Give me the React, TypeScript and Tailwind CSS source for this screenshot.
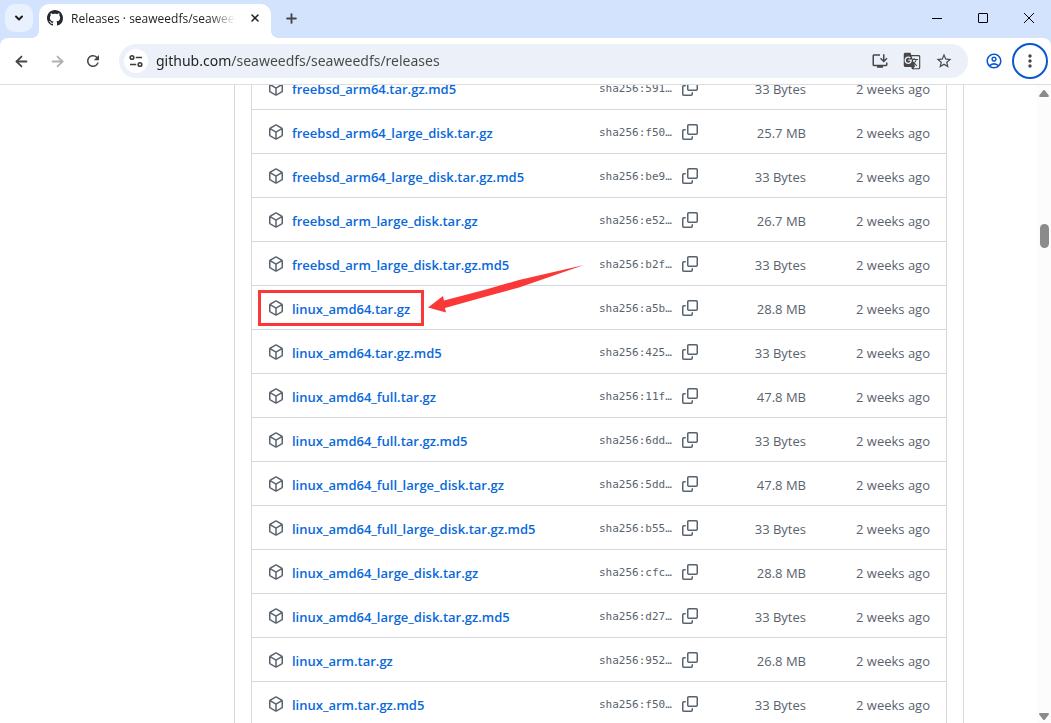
import React from "react";
import { ArrowLeft, ArrowRight, Plus, X, ChevronDown } from "lucide-react";
import { MdRefresh, MdGTranslate, MdOutlineInstallDesktop, MdStarBorder, MdOutlineAccountCircle, MdMoreVert } from "react-icons/md";

type Asset = {
    name: string;
    sha: string;
    size: string;
    marked?: boolean;
};

const assets: Asset[] = [
    { name: "freebsd_arm64.tar.gz.md5", sha: "591", size: "33 Bytes" },
    { name: "freebsd_arm64_large_disk.tar.gz", sha: "f50", size: "25.7 MB" },
    { name: "freebsd_arm64_large_disk.tar.gz.md5", sha: "be9", size: "33 Bytes" },
    { name: "freebsd_arm_large_disk.tar.gz", sha: "e52", size: "26.7 MB" },
    { name: "freebsd_arm_large_disk.tar.gz.md5", sha: "b2f", size: "33 Bytes" },
    { name: "linux_amd64.tar.gz", sha: "a5b", size: "28.8 MB", marked: true },
    { name: "linux_amd64.tar.gz.md5", sha: "425", size: "33 Bytes" },
    { name: "linux_amd64_full.tar.gz", sha: "11f", size: "47.8 MB" },
    { name: "linux_amd64_full.tar.gz.md5", sha: "6dd", size: "33 Bytes" },
    { name: "linux_amd64_full_large_disk.tar.gz", sha: "5dd", size: "47.8 MB" },
    { name: "linux_amd64_full_large_disk.tar.gz.md5", sha: "b55", size: "33 Bytes" },
    { name: "linux_amd64_large_disk.tar.gz", sha: "cfc", size: "28.8 MB" },
    { name: "linux_amd64_large_disk.tar.gz.md5", sha: "d27", size: "33 Bytes" },
    { name: "linux_arm.tar.gz", sha: "952", size: "26.8 MB" },
    { name: "linux_arm.tar.gz.md5", sha: "f50", size: "33 Bytes" },
];

const GithubMark = () => (
    <svg viewBox="0 0 16 16" className="size-4 shrink-0 fill-[#24292f]">
        <path d="M8 0C3.58 0 0 3.58 0 8c0 3.54 2.29 6.53 5.47 7.59.4.07.55-.17.55-.38 0-.19-.01-.82-.01-1.49-2.01.37-2.53-.49-2.69-.94-.09-.23-.48-.94-.82-1.13-.28-.15-.68-.52-.01-.53.63-.01 1.08.58 1.23.82.72 1.21 1.87.87 2.33.66.07-.52.28-.87.51-1.07-1.78-.2-3.64-.89-3.64-3.95 0-.87.31-1.59.82-2.15-.08-.2-.36-1.02.08-2.12 0 0 .67-.21 2.2.82.64-.18 1.32-.27 2-.27.68 0 1.36.09 2 .27 1.53-1.04 2.2-.82 2.2-.82.44 1.1.16 1.92.08 2.12.51.56.82 1.27.82 2.15 0 3.07-1.87 3.75-3.65 3.95.29.25.54.73.54 1.48 0 1.07-.01 1.93-.01 2.2 0 .21.15.46.55.38A8.013 8.013 0 0 0 16 8c0-4.42-3.58-8-8-8z" />
    </svg>
);

const PackageIcon = () => (
    <svg viewBox="0 0 16 16" className="size-4 shrink-0 fill-[#59636e]">
        <path d="m8.878.392 5.25 3.045c.54.314.872.89.872 1.514v6.098a1.75 1.75 0 0 1-.872 1.514l-5.25 3.045a1.75 1.75 0 0 1-1.756 0l-5.25-3.045A1.75 1.75 0 0 1 1 11.049V4.951c0-.624.332-1.201.872-1.514L7.122.392a1.75 1.75 0 0 1 1.756 0ZM7.875 1.69l-4.63 2.685L8 7.133l4.755-2.758-4.63-2.685a.248.248 0 0 0-.25 0ZM2.5 5.677v5.372c0 .09.047.171.125.216l4.625 2.683V8.432Zm6.25 8.271 4.625-2.683a.25.25 0 0 0 .125-.216V5.677L8.75 8.432Z" />
    </svg>
);

const CopyIcon = () => (
    <svg viewBox="0 0 16 16" className="size-4 fill-[#59636e]">
        <path d="M0 6.75C0 5.784.784 5 1.75 5h1.5a.75.75 0 0 1 0 1.5h-1.5a.25.25 0 0 0-.25.25v7.5c0 .138.112.25.25.25h7.5a.25.25 0 0 0 .25-.25v-1.5a.75.75 0 0 1 1.5 0v1.5A1.75 1.75 0 0 1 9.25 16h-7.5A1.75 1.75 0 0 1 0 14.25Z" />
        <path d="M5 1.75C5 .784 5.784 0 6.75 0h7.5C15.216 0 16 .784 16 1.75v7.5A1.75 1.75 0 0 1 14.25 11h-7.5A1.75 1.75 0 0 1 5 9.25Zm1.75-.25a.25.25 0 0 0-.25.25v7.5c0 .138.112.25.25.25h7.5a.25.25 0 0 0 .25-.25v-7.5a.25.25 0 0 0-.25-.25Z" />
    </svg>
);

const TuneIcon = () => (
    <svg viewBox="0 0 14 14" className="size-3.5 fill-none stroke-[#3c3c3c]" strokeWidth="1.6">
        <circle cx="3" cy="3.5" r="1.8" />
        <path d="M6.8 3.5H13M1 10.5h6.2" />
        <circle cx="11" cy="10.5" r="1.8" />
    </svg>
);

const TitleBar = () => (
    <header className="flex h-[38px] shrink-0 items-start bg-[#d3e3fd] pl-[5px]">
        <button aria-label="Search tabs" className="mt-1 flex size-7 items-center justify-center rounded-[10px] bg-[#e9f0fe]">
            <ChevronDown size={12} strokeWidth={4} className="text-[#1f1f1f]" />
        </button>
        <div className="relative ml-1.5 mt-1 flex h-[34px] w-[232px] items-center rounded-t-[10px] bg-white pb-1.5 pl-2 pr-2">
            <span className="absolute -left-2 bottom-0 size-2 bg-[radial-gradient(circle_at_0_0,#d3e3fd_8px,white_8px)]" />
            <span className="absolute -right-2 bottom-0 size-2 bg-[radial-gradient(circle_at_100%_0,#d3e3fd_8px,white_8px)]" />
            <GithubMark />
            <span className="ml-2 mt-px flex-1 overflow-hidden whitespace-nowrap text-xs text-[#1f1f1f] [mask-image:linear-gradient(90deg,black_82%,transparent_98%)]">Releases · seaweedfs/seaweedfs</span>
            <button aria-label="Close tab" className="ml-2 flex size-4 items-center justify-center">
                <X size={12} strokeWidth={3} className="text-[#1f1f1f]" />
            </button>
        </div>
        <button aria-label="New tab" className="ml-1.5 mt-1 flex size-7 items-center justify-center">
            <Plus size={15} strokeWidth={3} className="text-[#474747]" />
        </button>
        <div className="-mr-px ml-auto flex">
            <button aria-label="Minimize" className="flex h-9 w-[46px] items-center justify-center">
                <span className="h-px w-2.5 bg-black" />
            </button>
            <button aria-label="Maximize" className="flex h-9 w-[46px] items-center justify-center">
                <span className="size-2.5 rounded-[1px] border border-black" />
            </button>
            <button aria-label="Close" className="flex h-9 w-[46px] items-center justify-center">
                <svg viewBox="0 0 10 10" className="size-2.5 stroke-black">
                    <path d="M0 0l10 10M10 0L0 10" />
                </svg>
            </button>
        </div>
    </header>
);

const Toolbar = () => (
    <div className="shrink-0 bg-[#d3e3fd]">
        <nav className="flex h-[47px] items-center rounded-t-lg border-b border-[#dcdde0] bg-white px-[3px]">
            <button aria-label="Back" className="flex size-9 items-center justify-center text-[#474747]">
                <ArrowLeft size={17} strokeWidth={2.5} />
            </button>
            <button aria-label="Forward" className="flex size-9 items-center justify-center text-[#b0b0b0]">
                <ArrowRight size={17} strokeWidth={2.5} />
            </button>
            <button aria-label="Reload" className="flex size-9 items-center justify-center text-[#474747]">
                <MdRefresh size={18} />
            </button>
            <div className="ml-2 flex h-[34px] flex-1 items-center rounded-full bg-[#ebf0f9] pl-[5px] pr-2 text-[#474747]">
                <button aria-label="View site information" className="flex size-6 items-center justify-center rounded-full bg-white">
                    <TuneIcon />
                </button>
                <input
                    type="text"
                    aria-label="Address"
                    defaultValue="github.com/seaweedfs/seaweedfs/releases"
                    className="ml-2 min-w-0 flex-1 bg-[linear-gradient(90deg,#1f1f1f_75px,#474747_75px)] bg-clip-text font-['Noto_Sans',sans-serif] text-sm text-transparent outline-none"
                />
                <button aria-label="Install" className="flex w-8 justify-center">
                    <MdOutlineInstallDesktop size={18} />
                </button>
                <button aria-label="Translate" className="flex w-8 justify-center">
                    <MdGTranslate size={18} />
                </button>
                <button aria-label="Bookmark" className="flex w-8 justify-center">
                    <MdStarBorder size={18} />
                </button>
            </div>
            <button aria-label="Profile" className="ml-2 flex size-9 items-center justify-center text-[#0b57d0]">
                <MdOutlineAccountCircle size={18} />
            </button>
            <button aria-label="Menu" className="flex size-9 items-center justify-center rounded-full border-2 border-[#0b57d0] text-[#474747]">
                <MdMoreVert size={20} />
            </button>
        </nav>
    </div>
);

// red frame and arrow drawn over the highlighted download
const Marker = () => (
    <>
        <span className="pointer-events-none absolute -left-2.5 -right-3.5 -top-2 h-9 border-3 border-[#fb3838]" />
        <svg viewBox="0 0 156 52" className="pointer-events-none absolute -top-9 left-full ml-[18px] h-[52px] w-[156px] fill-[#fb3838]">
            <path d="M0 45.5L15 34L16 38.5L58 27.5L91 18L156 3L91 25.5L58 34.5L17 46L18 50.5Z" />
        </svg>
    </>
);

const AssetRow = ({ asset }: { asset: Asset }) => (
    <li className="flex h-11 items-center border-t border-[#d1d9e0] px-4 text-[13px] text-[#59636e]">
        <div className="flex-1">
            <div className="relative inline-flex items-center gap-2 align-middle">
                <PackageIcon />
                <a href="#" className="whitespace-nowrap pt-0.5 font-semibold leading-4.5 text-[#0969da]">
                    {asset.name}
                </a>
                {asset.marked && <Marker />}
            </div>
        </div>
        <span className="w-[73px] pt-1 font-['DejaVu_Sans_Mono',monospace] text-[11px]">sha256:{asset.sha}…</span>
        <button aria-label="Copy digest" className="ml-2.5">
            <CopyIcon />
        </button>
        <span className="w-[108px] pt-1 text-right">{asset.size}</span>
        <span className="w-[124px] pt-1 text-right">2 weeks ago</span>
    </li>
);

const ScrollBar = () => (
    <div className="flex w-3.5 shrink-0 flex-col items-center bg-[#fcfcfc] pb-[3px] pt-[5px]">
        <svg viewBox="0 0 10 7" className="h-[7px] w-2.5 fill-[#8b8b8b]">
            <path d="M4 .6Q5-.5 6 .6L9.8 5.6Q10 7 9 7H1Q0 7 .2 5.6Z" />
        </svg>
        <span className="mt-[127px] h-6 w-[9px] rounded-full bg-[#8b8b8b]" />
        <svg viewBox="0 0 10 7" className="mt-auto h-[7px] w-2.5 fill-[#8b8b8b]">
            <path d="M4 6.4Q5 7.5 6 6.4L9.8 1.4Q10 0 9 0H1Q0 0 .2 1.4Z" />
        </svg>
    </div>
);

const App = () => {
    return (
        <div className="flex h-screen flex-col overflow-hidden bg-white font-['Open_Sans',sans-serif]">
            <TitleBar />
            <Toolbar />
            <div className="flex min-h-0 flex-1">
                <main className="min-w-0 flex-1 overflow-hidden pl-[234px] pr-[73px]">
                    <section className="-mt-5 border-x border-[#d1d9e0] px-4">
                        <ul className="border-x border-[#d1d9e0]">
                            {assets.map((asset) => (
                                <AssetRow key={asset.name} asset={asset} />
                            ))}
                        </ul>
                    </section>
                </main>
                <ScrollBar />
            </div>
        </div>
    );
};

export default App;
